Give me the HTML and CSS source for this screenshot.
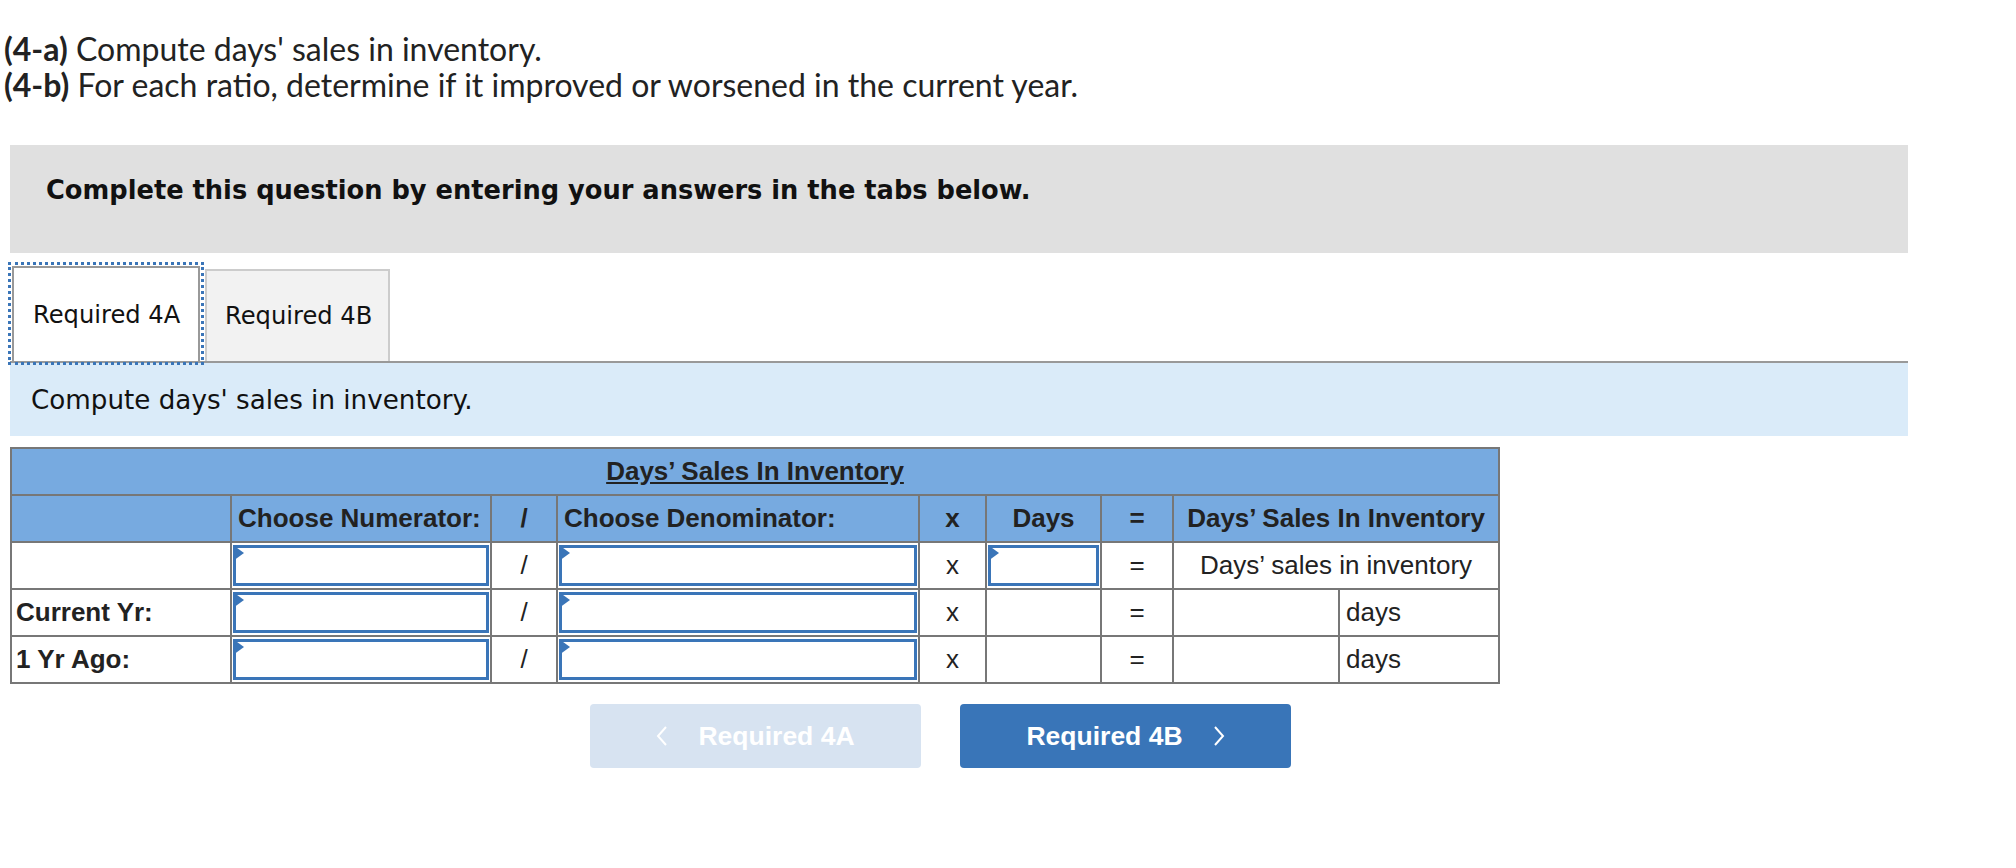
FILE: index.html
```html
<!DOCTYPE html>
<html lang="en">
<head>
    <meta charset="UTF-8">
    <title>Days' Sales In Inventory</title>
    <link rel="stylesheet" href="styles.css">
</head>
<body>
    <div class="question">
        <p><b>(4-a)</b> Compute days' sales in inventory.</p>
        <p><b>(4-b)</b> For each ratio, determine if it improved or worsened in the current year.</p>
    </div>

    <div class="banner">Complete this question by entering your answers in the tabs below.</div>

    <div class="tabs">
        <div class="tab active">Required 4A</div>
        <div class="tab">Required 4B</div>
    </div>

    <div class="instruction">Compute days' sales in inventory.</div>

    <table class="ratio">
        <colgroup>
            <col style="width:220px">
            <col style="width:260px">
            <col style="width:66px">
            <col style="width:362px">
            <col style="width:67px">
            <col style="width:115px">
            <col style="width:72px">
            <col style="width:166px">
            <col style="width:160px">
        </colgroup>
        <tr class="head title-row">
            <td colspan="9"><u>Days’ Sales In Inventory</u></td>
        </tr>
        <tr class="head">
            <td></td>
            <td class="left">Choose Numerator:</td>
            <td>/</td>
            <td class="left">Choose Denominator:</td>
            <td>x</td>
            <td>Days</td>
            <td>=</td>
            <td colspan="2">Days’ Sales In Inventory</td>
        </tr>
        <tr>
            <td></td>
            <td class="field"><div class="box"></div></td>
            <td>/</td>
            <td class="field"><div class="box"></div></td>
            <td>x</td>
            <td class="field"><div class="box"></div></td>
            <td>=</td>
            <td colspan="2" class="plain">Days’ sales in inventory</td>
        </tr>
        <tr>
            <td class="label">Current Yr:</td>
            <td class="field"><div class="box"></div></td>
            <td>/</td>
            <td class="field"><div class="box"></div></td>
            <td>x</td>
            <td></td>
            <td>=</td>
            <td></td>
            <td class="unit">days</td>
        </tr>
        <tr>
            <td class="label">1 Yr Ago:</td>
            <td class="field"><div class="box"></div></td>
            <td>/</td>
            <td class="field"><div class="box"></div></td>
            <td>x</td>
            <td></td>
            <td>=</td>
            <td></td>
            <td class="unit">days</td>
        </tr>
    </table>

    <div class="nav">
        <button class="prev" disabled>
            <svg width="12" height="22" viewBox="0 0 12 22"><path d="M10 2 L2 11 L10 20" fill="none" stroke="currentColor" stroke-width="2"/></svg>
            Required 4A
        </button>
        <button class="next">
            Required 4B
            <svg width="12" height="22" viewBox="0 0 12 22"><path d="M2 2 L10 11 L2 20" fill="none" stroke="currentColor" stroke-width="2"/></svg>
        </button>
    </div>
</body>
</html>
```

FILE: styles.css
```css
body {
    margin: 0;
    font-family: "DejaVu Sans", Verdana, sans-serif;
    color: #111;
    background: #fff;
}
.question {
    font-family: Lato, "Open Sans", sans-serif;
    font-size: 32px;
    color: #222;
    padding: 31px 0 0 4px;
    height: 145px;
    box-sizing: border-box;
}
.question p { margin: 0; line-height: 36px; }
.banner {
    margin-left: 10px;
    width: 1898px;
    height: 108px;
    box-sizing: border-box;
    background: #e0e0e0;
    font-weight: bold;
    font-size: 25.7px;
    padding: 0 0 18px 36px;
    display: flex;
    align-items: center;
}
.tabs {
    display: flex;
    margin: 13px 0 0 12px;
    gap: 5px;
    align-items: flex-end;
}
.tab {
    font-size: 24.2px;
    white-space: nowrap;
    height: 92px;
    box-sizing: border-box;
    display: flex;
    align-items: center;
    padding: 0 16px 0 18px;
    background: #f2f2f2;
    border: 2px solid #ccc;
    border-bottom: none;
}
.tab.active {
    background: #fff;
    border-color: #999;
    width: 188px;
    padding: 0 0 0 19px;
    outline: 3px dotted #3a75b8;
    outline-offset: 1px;
    height: 95px;
}
.instruction {
    margin-left: 10px;
    width: 1898px;
    height: 75px;
    box-sizing: border-box;
    border-top: 2px solid #999;
    background: #daebf9;
    font-size: 26.2px;
    padding-left: 21px;
    display: flex;
    align-items: center;
}
.ratio {
    margin: 11px 0 0 10px;
    border-collapse: collapse;
    table-layout: fixed;
    width: 1490px;
    font-family: "Liberation Sans", Arial, sans-serif;
    font-size: 26px;
    color: #222;
}
.ratio td {
    border: 2px solid #777;
    height: 43px;
    padding: 0;
    text-align: center;
}
.ratio .head td { background: #77aae0; font-weight: bold; height: 45px; }
.ratio .left { text-align: left; padding-left: 6px; }
.ratio .label { text-align: left; padding-left: 4px; font-weight: bold; }
.ratio .unit { text-align: left; padding-left: 6px; }
.ratio .field { padding: 1px; }
.box {
    position: relative;
    height: 41px;
    border: 3px solid #3a75b8;
    box-sizing: border-box;
    background: #fff;
}
.box::before {
    content: "";
    position: absolute;
    left: -3px;
    top: -3px;
    border-left: 11px solid #3a75b8;
    border-top: 8px solid transparent;
    border-bottom: 8px solid transparent;
}
.nav {
    display: flex;
    gap: 39px;
    margin: 20px 0 0 590px;
}
.nav button {
    width: 331px;
    height: 64px;
    border: none;
    border-radius: 4px;
    font-family: "Liberation Sans", Arial, sans-serif;
    font-weight: bold;
    font-size: 26.5px;
    color: #fff;
    display: flex;
    align-items: center;
    justify-content: center;
    gap: 30px;
}
.nav .prev { background: #d7e3f1; }
.nav .next { background: #3975b8; }
```
